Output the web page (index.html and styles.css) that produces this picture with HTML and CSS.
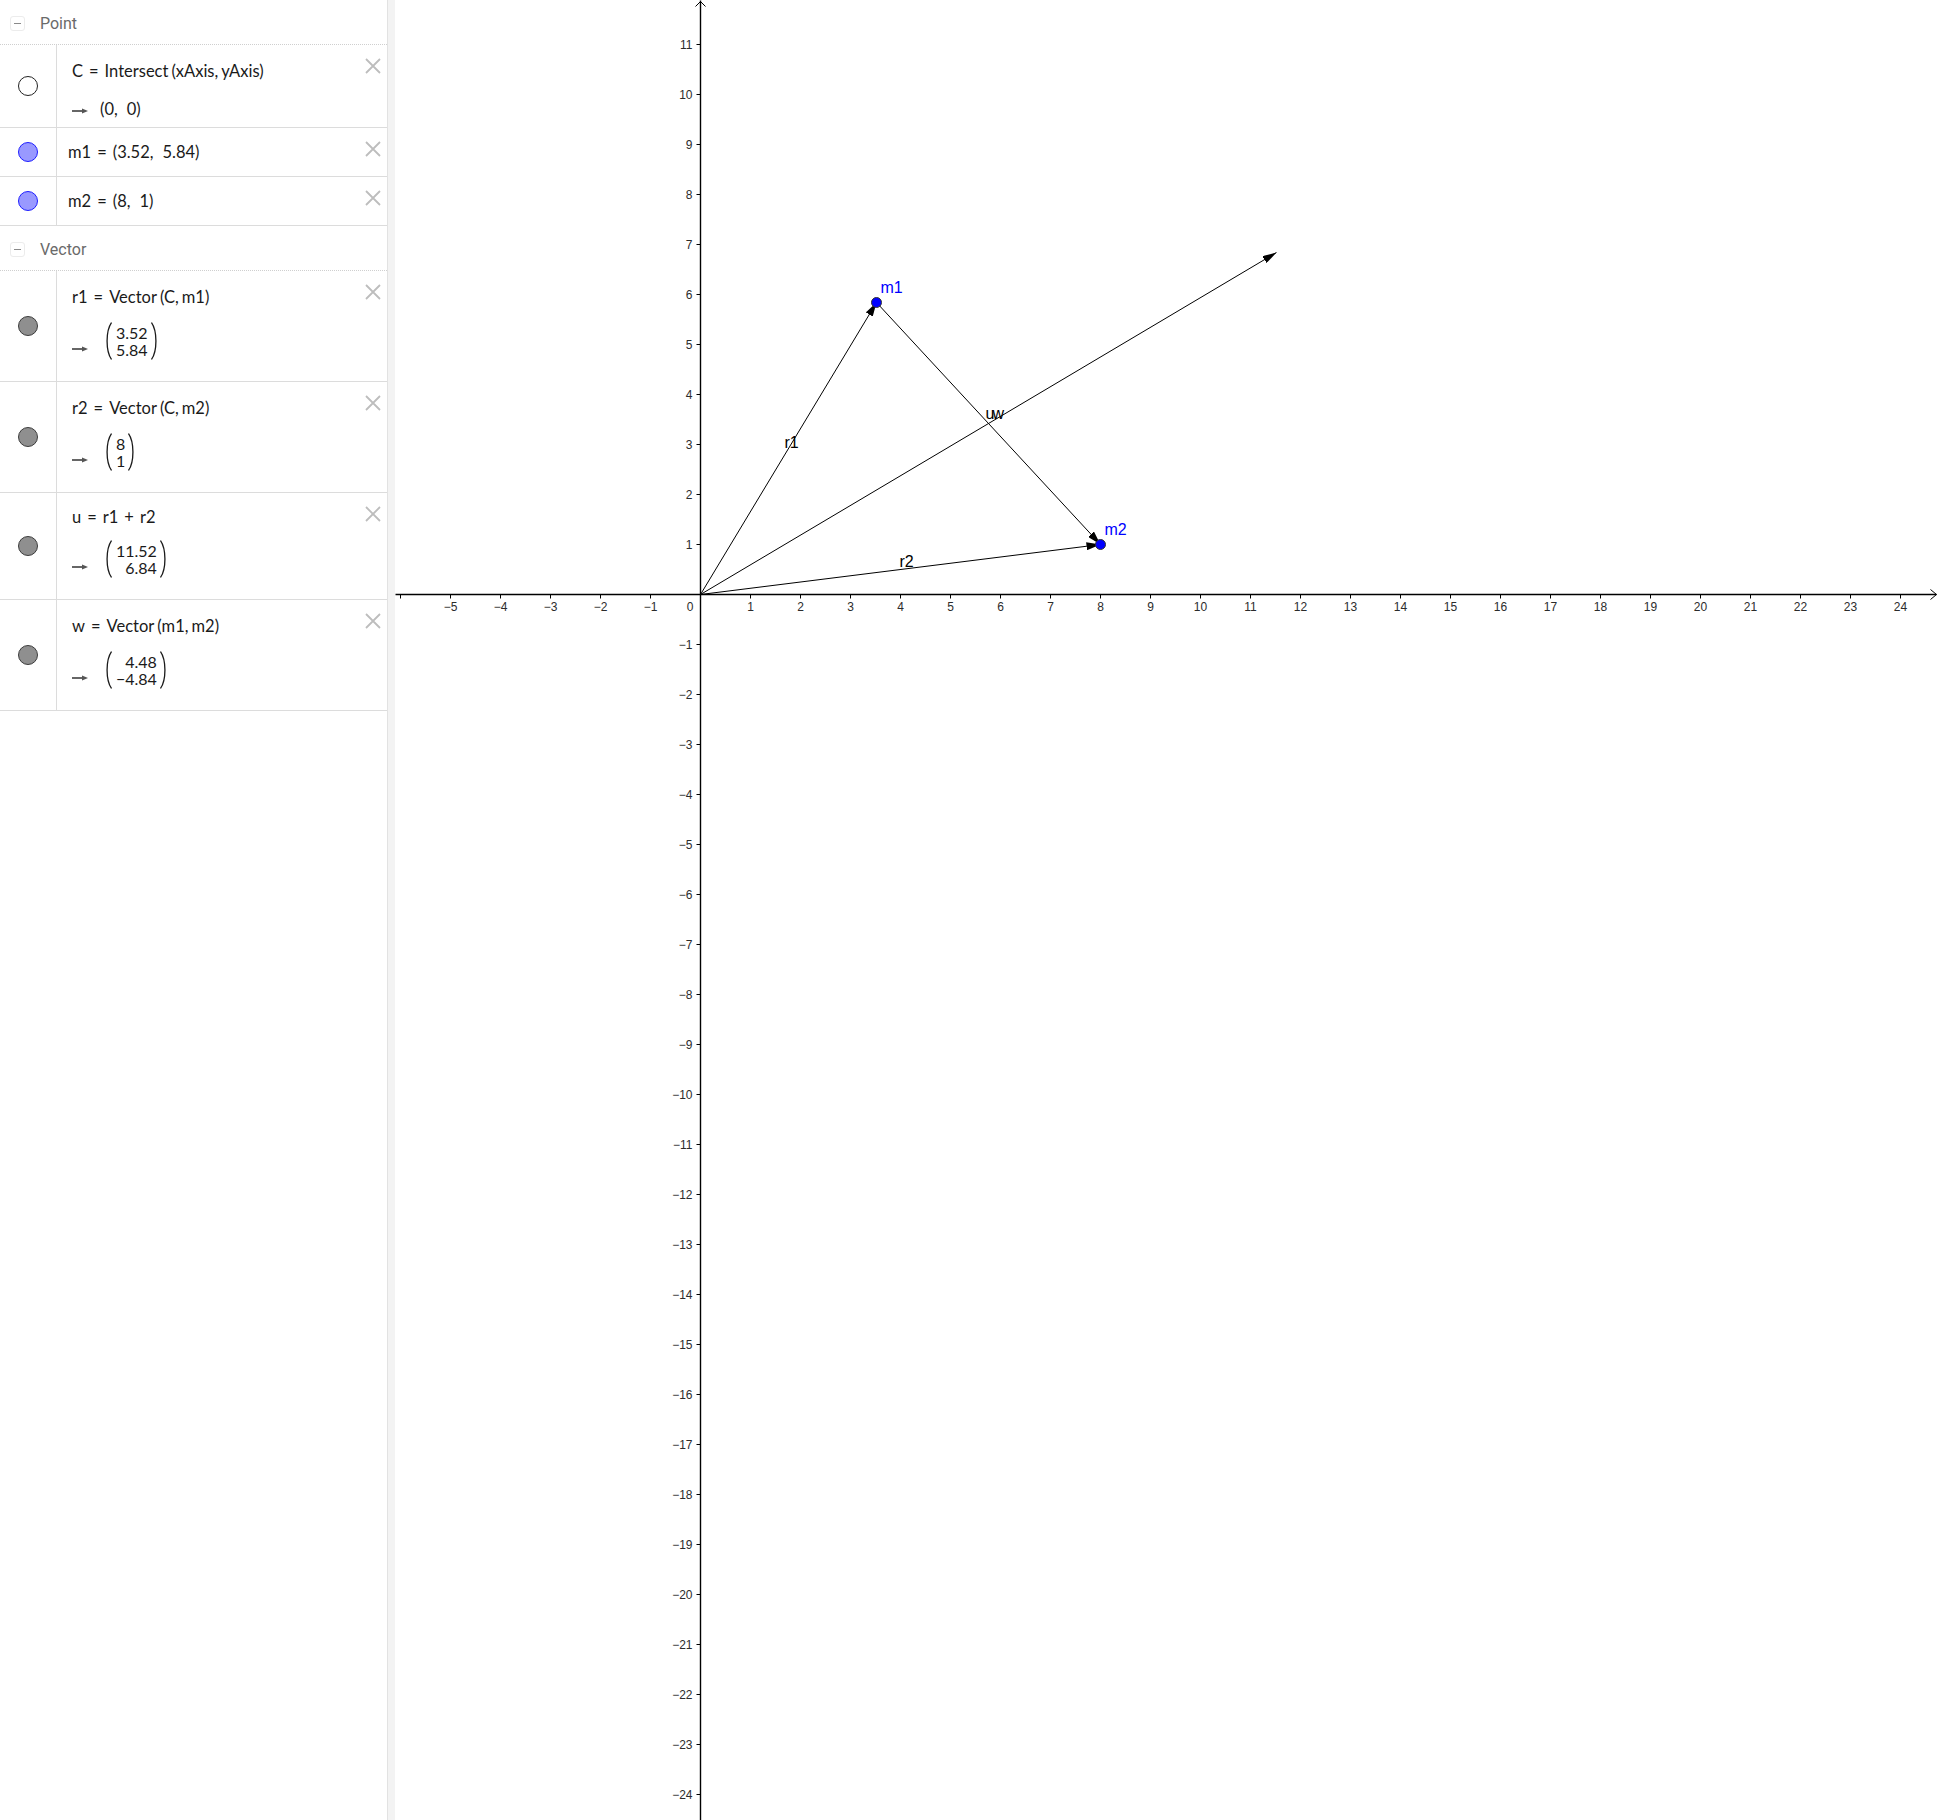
FILE: index.html
```html
<!DOCTYPE html>
<html>
<head>
<meta charset="utf-8">
<title>GeoGebra</title>
<link rel="stylesheet" href="styles.css">
</head>
<body>
<div class="app">
  <aside class="algebra">
    <div class="group-header">
      <span class="toggle"><span class="toggle-bar"></span></span>
      <span class="group-title">Point</span>
    </div>

    <div class="item">
      <div class="marble-col"><span class="marble marble-white"></span></div>
      <div class="item-body body-c">
        <div class="def">C<span class="eq">=</span>Intersect<span class="fn">(xAxis,</span><span class="thin"></span>yAxis)</div>
        <div class="val val-text">
          <svg class="arrow" width="16" height="10" viewBox="0 0 16 10"><line x1="0" y1="5" x2="12" y2="5"/><path d="M10 2.5 L16 5 L10 7.5 Z"/></svg>
          <span class="val-pt">(0,<span class="gap"></span>0)</span>
        </div>
      </div>
      <span class="del"><svg width="16" height="16" viewBox="0 0 16 16"><path d="M1 1 L15 15 M15 1 L1 15"/></svg></span>
    </div>

    <div class="item">
      <div class="marble-col"><span class="marble marble-blue"></span></div>
      <div class="item-body body-single">
        <div class="def">m1<span class="eq">=</span>(3.52,<span class="gap"></span>5.84)</div>
      </div>
      <span class="del"><svg width="16" height="16" viewBox="0 0 16 16"><path d="M1 1 L15 15 M15 1 L1 15"/></svg></span>
    </div>

    <div class="item">
      <div class="marble-col"><span class="marble marble-blue"></span></div>
      <div class="item-body body-single">
        <div class="def">m2<span class="eq">=</span>(8,<span class="gap"></span>1)</div>
      </div>
      <span class="del"><svg width="16" height="16" viewBox="0 0 16 16"><path d="M1 1 L15 15 M15 1 L1 15"/></svg></span>
    </div>

    <div class="group-header">
      <span class="toggle"><span class="toggle-bar"></span></span>
      <span class="group-title">Vector</span>
    </div>

    <div class="item">
      <div class="marble-col"><span class="marble marble-gray"></span></div>
      <div class="item-body body-vec">
        <div class="def">r1<span class="eq">=</span>Vector<span class="fn">(C,</span><span class="thin"></span>m1)</div>
        <div class="val val-vec">
          <svg class="arrow" width="16" height="10" viewBox="0 0 16 10"><line x1="0" y1="5" x2="12" y2="5"/><path d="M10 2.5 L16 5 L10 7.5 Z"/></svg>
          <span class="matrix">
            <svg class="paren" width="7" height="38" viewBox="0 0 7 38"><path d="M6.5 0.5 C0.6 9 0.6 29 6.5 37.5"/></svg>
            <span class="cells"><span>3.52</span><span>5.84</span></span>
            <svg class="paren" width="7" height="38" viewBox="0 0 7 38"><path d="M0.5 0.5 C6.4 9 6.4 29 0.5 37.5"/></svg>
          </span>
        </div>
      </div>
      <span class="del"><svg width="16" height="16" viewBox="0 0 16 16"><path d="M1 1 L15 15 M15 1 L1 15"/></svg></span>
    </div>

    <div class="item">
      <div class="marble-col"><span class="marble marble-gray"></span></div>
      <div class="item-body body-vec">
        <div class="def">r2<span class="eq">=</span>Vector<span class="fn">(C,</span><span class="thin"></span>m2)</div>
        <div class="val val-vec">
          <svg class="arrow" width="16" height="10" viewBox="0 0 16 10"><line x1="0" y1="5" x2="12" y2="5"/><path d="M10 2.5 L16 5 L10 7.5 Z"/></svg>
          <span class="matrix">
            <svg class="paren" width="7" height="38" viewBox="0 0 7 38"><path d="M6.5 0.5 C0.6 9 0.6 29 6.5 37.5"/></svg>
            <span class="cells cells-center"><span>8</span><span>1</span></span>
            <svg class="paren" width="7" height="38" viewBox="0 0 7 38"><path d="M0.5 0.5 C6.4 9 6.4 29 0.5 37.5"/></svg>
          </span>
        </div>
      </div>
      <span class="del"><svg width="16" height="16" viewBox="0 0 16 16"><path d="M1 1 L15 15 M15 1 L1 15"/></svg></span>
    </div>

    <div class="item">
      <div class="marble-col"><span class="marble marble-gray"></span></div>
      <div class="item-body body-vec body-u">
        <div class="def">u<span class="eq">=</span>r1<span class="eq">+</span>r2</div>
        <div class="val val-vec">
          <svg class="arrow" width="16" height="10" viewBox="0 0 16 10"><line x1="0" y1="5" x2="12" y2="5"/><path d="M10 2.5 L16 5 L10 7.5 Z"/></svg>
          <span class="matrix">
            <svg class="paren" width="7" height="38" viewBox="0 0 7 38"><path d="M6.5 0.5 C0.6 9 0.6 29 6.5 37.5"/></svg>
            <span class="cells"><span>11.52</span><span>6.84</span></span>
            <svg class="paren" width="7" height="38" viewBox="0 0 7 38"><path d="M0.5 0.5 C6.4 9 6.4 29 0.5 37.5"/></svg>
          </span>
        </div>
      </div>
      <span class="del"><svg width="16" height="16" viewBox="0 0 16 16"><path d="M1 1 L15 15 M15 1 L1 15"/></svg></span>
    </div>

    <div class="item">
      <div class="marble-col"><span class="marble marble-gray"></span></div>
      <div class="item-body body-vec">
        <div class="def">w<span class="eq">=</span>Vector<span class="fn">(m1,</span><span class="thin"></span>m2)</div>
        <div class="val val-vec">
          <svg class="arrow" width="16" height="10" viewBox="0 0 16 10"><line x1="0" y1="5" x2="12" y2="5"/><path d="M10 2.5 L16 5 L10 7.5 Z"/></svg>
          <span class="matrix">
            <svg class="paren" width="7" height="38" viewBox="0 0 7 38"><path d="M6.5 0.5 C0.6 9 0.6 29 6.5 37.5"/></svg>
            <span class="cells"><span>4.48</span><span>&minus;4.84</span></span>
            <svg class="paren" width="7" height="38" viewBox="0 0 7 38"><path d="M0.5 0.5 C6.4 9 6.4 29 0.5 37.5"/></svg>
          </span>
        </div>
      </div>
      <span class="del"><svg width="16" height="16" viewBox="0 0 16 16"><path d="M1 1 L15 15 M15 1 L1 15"/></svg></span>
    </div>
  </aside>

  <div class="splitter"></div>

  <main class="graphics">
    <svg class="plot" width="1543" height="1820" viewBox="0 0 1543 1820">
      <defs>
        <pattern id="xticks" patternUnits="userSpaceOnUse" x="-0.5" y="0" width="50" height="6">
          <rect width="1" height="6" fill="#000"/>
        </pattern>
        <pattern id="yticks" patternUnits="userSpaceOnUse" x="-6" y="-0.5" width="6" height="50">
          <rect width="6" height="1" fill="#000"/>
        </pattern>
        <marker id="head" viewBox="0 0 14 8" refX="14" refY="4" markerWidth="14" markerHeight="8" markerUnits="userSpaceOnUse" orient="auto">
          <path d="M0 0 L14 4 L0 8 Z" fill="#000"/>
        </marker>
      </defs>
      <g transform="translate(305.5 594.5)">
        <line class="axis" x1="-305" y1="0" x2="1236" y2="0"/>
        <path class="axis-head" d="M1230 -5 L1236 0 L1230 5"/>
        <line class="axis" x1="0" y1="-594" x2="0" y2="1226"/>
        <path class="axis-head" d="M-5 -588 L0 -593 L5 -588"/>
        <rect x="-300.5" y="0" width="1501" height="4" fill="url(#xticks)"/>
        <rect x="-4" y="-550.5" width="4" height="1751" fill="url(#yticks)"/>

        <g class="xlab">
          <text x="-250" y="16">−5</text><text x="-200" y="16">−4</text><text x="-150" y="16">−3</text><text x="-100" y="16">−2</text><text x="-50" y="16">−1</text>
          <text x="50" y="16">1</text><text x="100" y="16">2</text><text x="150" y="16">3</text><text x="200" y="16">4</text><text x="250" y="16">5</text>
          <text x="300" y="16">6</text><text x="350" y="16">7</text><text x="400" y="16">8</text><text x="450" y="16">9</text><text x="500" y="16">10</text>
          <text x="550" y="16">11</text><text x="600" y="16">12</text><text x="650" y="16">13</text><text x="700" y="16">14</text><text x="750" y="16">15</text>
          <text x="800" y="16">16</text><text x="850" y="16">17</text><text x="900" y="16">18</text><text x="950" y="16">19</text><text x="1000" y="16">20</text>
          <text x="1050" y="16">21</text><text x="1100" y="16">22</text><text x="1150" y="16">23</text><text x="1200" y="16">24</text>
        </g>
        <g class="ylab">
          <text x="-7" y="16">0</text>
          <text x="-8" y="-546">11</text><text x="-8" y="-496">10</text><text x="-8" y="-446">9</text><text x="-8" y="-396">8</text>
          <text x="-8" y="-346">7</text><text x="-8" y="-296">6</text><text x="-8" y="-246">5</text><text x="-8" y="-196">4</text>
          <text x="-8" y="-146">3</text><text x="-8" y="-96">2</text><text x="-8" y="-46">1</text>
          <text x="-8" y="54">−1</text><text x="-8" y="104">−2</text><text x="-8" y="154">−3</text><text x="-8" y="204">−4</text>
          <text x="-8" y="254">−5</text><text x="-8" y="304">−6</text><text x="-8" y="354">−7</text><text x="-8" y="404">−8</text>
          <text x="-8" y="454">−9</text><text x="-8" y="504">−10</text><text x="-8" y="554">−11</text><text x="-8" y="604">−12</text>
          <text x="-8" y="654">−13</text><text x="-8" y="704">−14</text><text x="-8" y="754">−15</text><text x="-8" y="804">−16</text>
          <text x="-8" y="854">−17</text><text x="-8" y="904">−18</text><text x="-8" y="954">−19</text><text x="-8" y="1004">−20</text>
          <text x="-8" y="1054">−21</text><text x="-8" y="1104">−22</text><text x="-8" y="1154">−23</text><text x="-8" y="1204">−24</text>
        </g>

        <line class="vec" x1="0" y1="0" x2="176" y2="-292" marker-end="url(#head)"/>
        <line class="vec" x1="0" y1="0" x2="400" y2="-50" marker-end="url(#head)"/>
        <line class="vec" x1="0" y1="0" x2="576" y2="-342" marker-end="url(#head)"/>
        <line class="vec" x1="176" y1="-292" x2="400" y2="-50" marker-end="url(#head)"/>

        <circle class="pt" cx="176" cy="-292" r="5"/>
        <circle class="pt" cx="400" cy="-50" r="5"/>

        <text class="lbl lbl-pt" x="180" y="-302">m1</text>
        <text class="lbl lbl-pt" x="404" y="-60">m2</text>
        <text class="lbl" x="84" y="-147">r1</text>
        <text class="lbl" x="199" y="-28">r2</text>
        <text class="lbl" x="285" y="-176">u</text>
        <text class="lbl" x="292" y="-176">w</text>
      </g>
    </svg>
  </main>
</div>
</body>
</html>
```

FILE: styles.css
```css
html, body {
  margin: 0;
  padding: 0;
  background: #fff;
}

body {
  font-family: "Lato", "Liberation Sans", sans-serif;
  color: #1a1a1a;
  overflow: hidden;
}

.app {
  display: flex;
  height: 1820px;
  width: 1938px;
}

/* ---------- Algebra view ---------- */
.algebra {
  width: 387px;
  flex: none;
  background: #fff;
}

.splitter {
  width: 7px;
  flex: none;
  background: #f3f3f3;
  border-left: 1px solid #e2e2e2;
}

.group-header {
  height: 45px;
  box-sizing: border-box;
  display: flex;
  align-items: center;
  border-bottom: 1px dotted #cfcfcf;
  padding-top: 3px;
}

.toggle {
  width: 15px;
  height: 15px;
  margin-left: 10px;
  margin-right: 15px;
  border: 1px solid #ececec;
  border-radius: 3px;
  box-sizing: border-box;
  display: flex;
  align-items: center;
  justify-content: center;
}

.toggle-bar {
  width: 7px;
  height: 1.5px;
  background: #8a8a8a;
}

.group-title {
  font-family: "Roboto", "Liberation Sans", sans-serif;
  font-size: 16px;
  color: #6a6a6a;
}

.item {
  display: flex;
  border-bottom: 1px solid #dcdcdc;
}

.marble-col {
  width: 56px;
  flex: none;
  border-right: 1px solid #dcdcdc;
  display: flex;
  align-items: center;
  justify-content: center;
}

.marble {
  width: 20px;
  height: 20px;
  border-radius: 50%;
  box-sizing: border-box;
  border: 1px solid #333;
  display: block;
}

.marble-white { background: #fff; border-color: #222; }
.marble-blue { background: #9999ff; border-color: #1f1fff; }
.marble-gray { background: #8f8f8f; border-color: #3c3c3c; }

.item-body {
  flex: 1;
  padding-left: 15px;
}

.def {
  font-size: 16.5px;
  line-height: 20px;
  height: 20px;
  white-space: nowrap;
}

.eq {
  margin: 0 6px;
}

.fn {
  margin-left: 3px;
}

.thin {
  display: inline-block;
  width: 3px;
}

.gap {
  display: inline-block;
  width: 9px;
}

.body-c { padding-top: 16px; padding-bottom: 8px; }
.body-single { padding-top: 14px; padding-bottom: 14px; padding-left: 11px; }
.body-vec { padding-top: 16px; padding-bottom: 21px; }
.body-u { padding-top: 14px; }

.val {
  display: flex;
  align-items: center;
}

.val-text {
  margin-top: 18px;
  height: 20px;
}

.val-vec {
  margin-top: 15px;
  height: 38px;
}

.body-u .val-vec { margin-top: 13px; }

.arrow {
  flex: none;
  display: block;
  margin-top: 4px;
}

.val-vec .arrow {
  margin-top: 15px;
}

.arrow line {
  stroke: #555;
  stroke-width: 1.8;
}

.arrow path {
  fill: #555;
}

.val-pt {
  margin-left: 12px;
  font-size: 16.5px;
  line-height: 20px;
}

.matrix {
  display: flex;
  align-items: center;
  margin-left: 17px;
  height: 38px;
}

.paren {
  flex: none;
  display: block;
}

.paren path {
  fill: none;
  stroke: #1a1a1a;
  stroke-width: 1.3;
}

.cells {
  display: flex;
  flex-direction: column;
  align-items: flex-end;
  font-size: 16px;
  line-height: 17px;
  padding: 0 3px 0 4px;
}

.cells-center {
  align-items: center;
}

.del {
  flex: none;
  width: 16px;
  height: 16px;
  margin: 13px 6px 0 0;
  display: block;
}

.del svg {
  display: block;
}

.del path {
  stroke: #bdbdbd;
  stroke-width: 1.8;
  fill: none;
}

/* ---------- Graphics view ---------- */
.graphics {
  flex: 1;
  overflow: hidden;
  background: #fff;
}

.plot {
  display: block;
}

.axis {
  stroke: #000;
  stroke-width: 1.4;
}

.axis-head {
  stroke: #000;
  stroke-width: 1;
  fill: none;
}

.xlab text {
  font-family: "Liberation Sans", Arial, sans-serif;
  font-size: 12px;
  fill: #2b2b2b;
  text-anchor: middle;
}

.ylab text {
  font-family: "Liberation Sans", Arial, sans-serif;
  font-size: 12px;
  fill: #2b2b2b;
  text-anchor: end;
}

.vec {
  stroke: #000;
  stroke-width: 1;
}

.pt {
  fill: #0000ff;
  stroke: #333;
  stroke-width: 1;
}

.lbl {
  font-family: "Liberation Sans", Arial, sans-serif;
  font-size: 16px;
  fill: #000;
}

.lbl-pt {
  fill: #0000ff;
}
```
